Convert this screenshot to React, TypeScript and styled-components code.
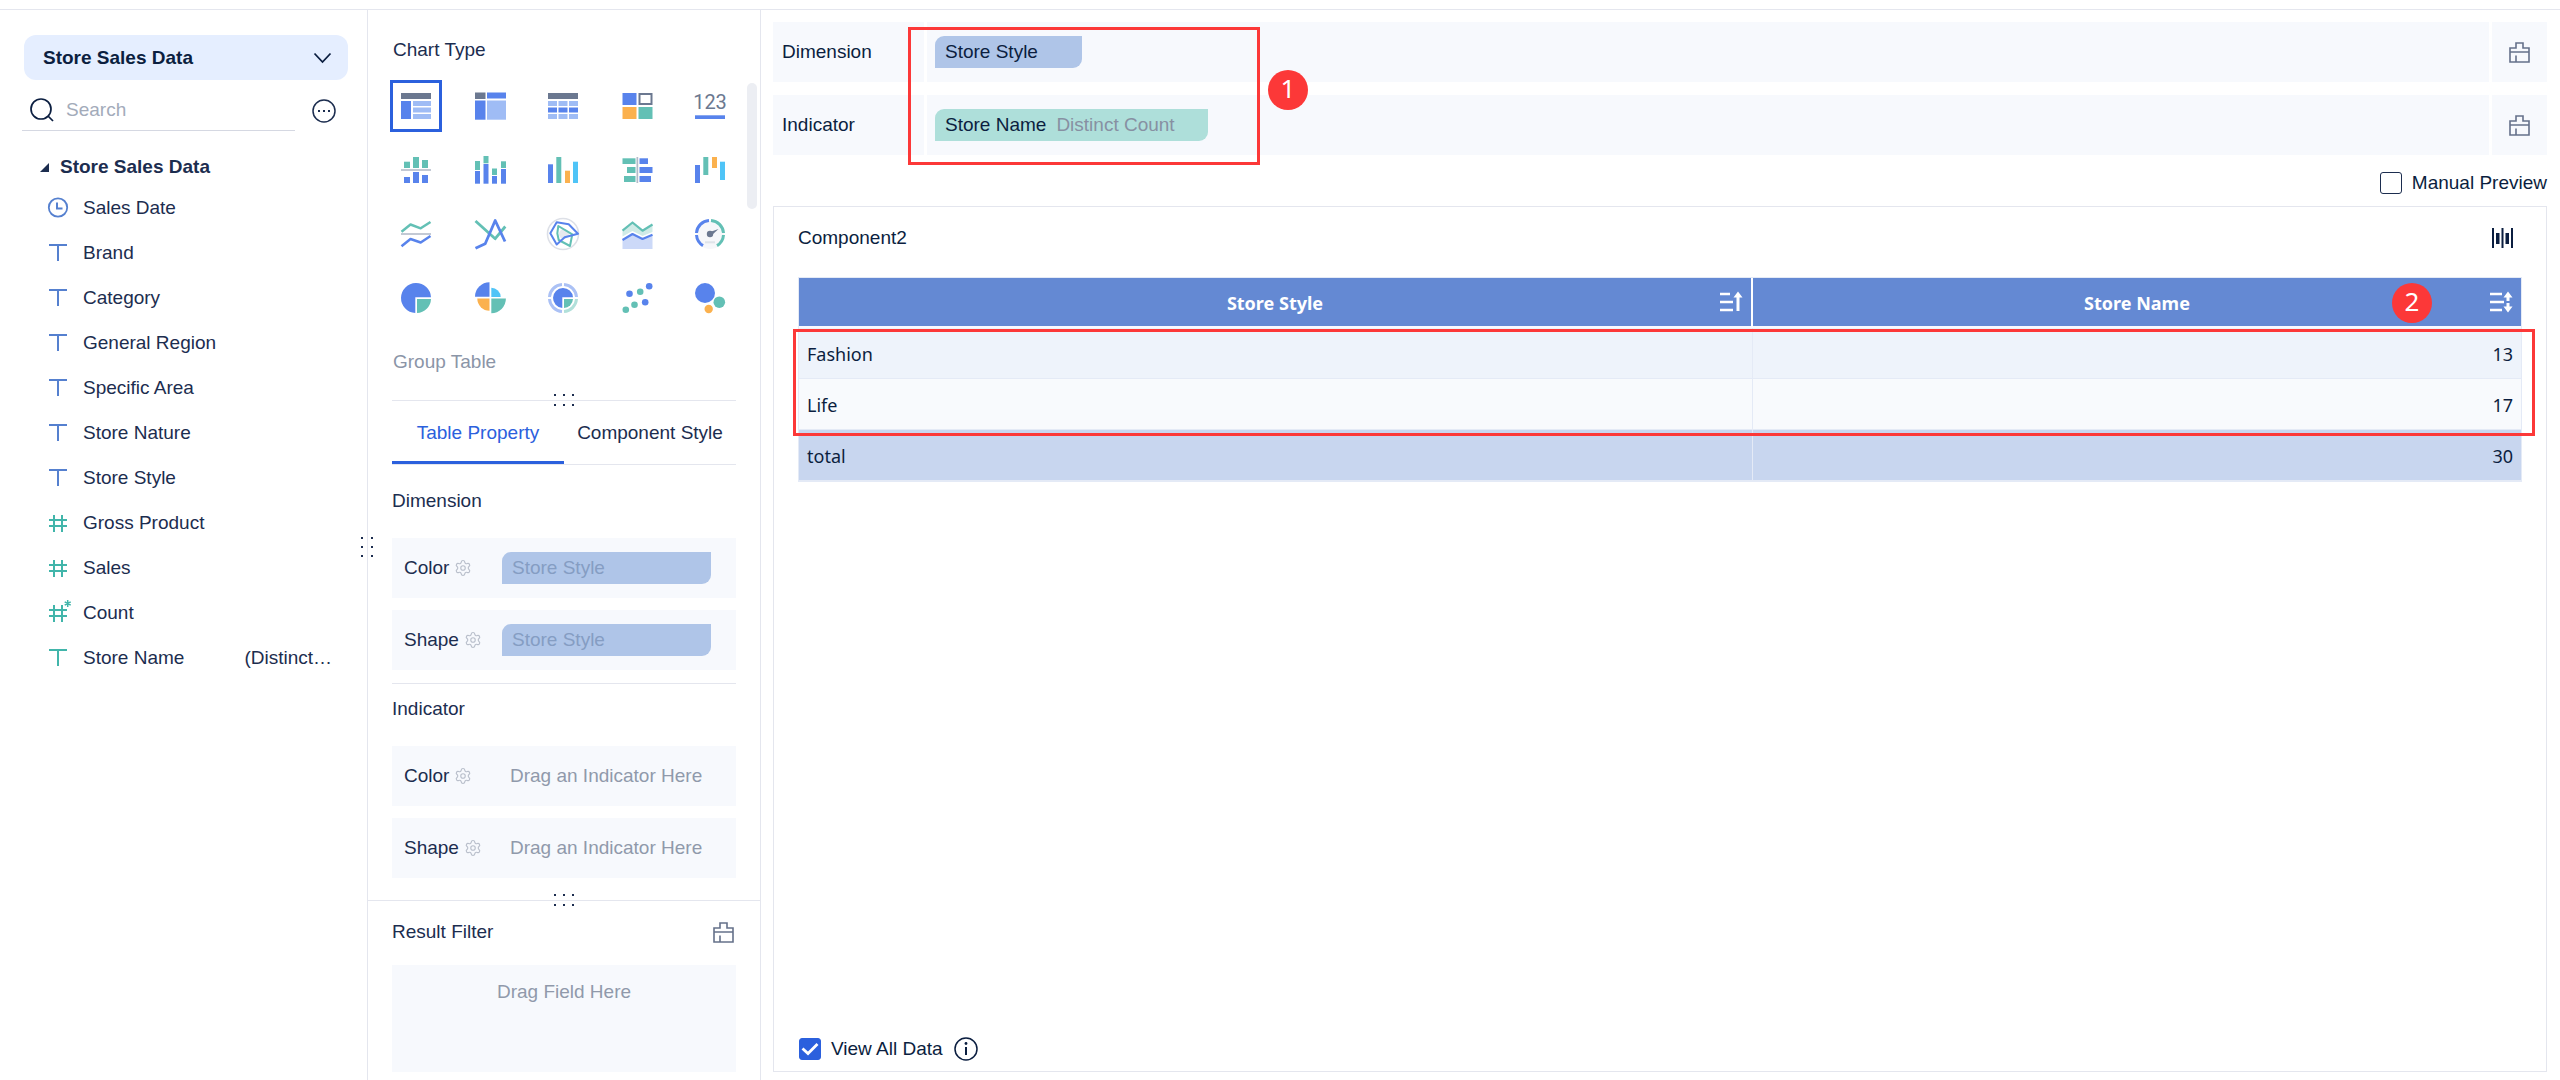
import React, { useState } from "react";
import styled, { createGlobalStyle, css } from "styled-components";
import { Settings } from "lucide-react";

const c = {
  ink: "#1c2d4f",
  inkDark: "#0b1e40",
  muted: "#9099ab",
  line: "#e4e6ee",
  panel: "#f7f9fd",
  primary: "#2b60dd",
  blue: "#5883ec",
  lightBlue: "#9fbcf5",
  teal: "#63c0b5",
  orange: "#fbb14e",
  cyan: "#4fc4f7",
  slate: "#6b7890",
  chipBlue: "#afc5e8",
  chipTeal: "#aedfda",
  mark: "#fc3838",
  head: "#6489d3",
};

const GlobalStyle = createGlobalStyle`
  *, *::before, *::after { box-sizing: border-box; }
  body {
    margin: 0;
    background: #fff;
    color: ${c.ink};
    font: 19px/24px "Liberation Sans", Arial, sans-serif;
  }
  button, input, select { font: inherit; color: inherit; }
  button { padding: 0; border: 0; background: none; cursor: pointer; }
  h2, h3, ul, p { margin: 0; padding: 0; font-size: inherit; font-weight: inherit; }
  ul { list-style: none; }
  svg { display: block; flex: none; }
`;

const Page = styled.div`
  min-height: 100vh;
  padding-top: 9px;
  display: flex;
`;

const Workspace = styled.div`
  flex: 1;
  min-width: 0;
  display: flex;
  border-top: 1px solid ${c.line};
`;

/* ---------- data sidebar ---------- */

const Sidebar = styled.aside`
  position: relative;
  flex: none;
  width: 368px;
  padding: 25px 19px 0 24px;
  border-right: 1px solid ${c.line};
`;

const DatasetPicker = styled.div`
  display: grid;
  align-items: center;
  height: 45px;
  border-radius: 12px;
  background: #e5eeff;

  > * { grid-area: 1 / 1; }
  > svg { justify-self: end; margin-right: 16px; pointer-events: none; }
`;

const DatasetSelect = styled.select`
  width: 100%;
  height: 100%;
  padding: 0 40px 0 19px;
  appearance: none;
  border: 0;
  background: none;
  color: ${c.inkDark};
  font-weight: bold;
`;

const SearchRow = styled.div`
  display: flex;
  align-items: center;
  gap: 17px;
  margin: 11px 0 0 -2px;
  padding-right: 12px;
`;

const SearchBox = styled.label`
  flex: none;
  display: flex;
  align-items: center;
  gap: 12px;
  width: 273px;
  height: 40px;
  padding: 0 0 1px 8px;
  border-bottom: 1px solid #d5d8e2;

  input {
    flex: 1;
    min-width: 0;
    padding: 0;
    border: 0;
    outline: 0;
    background: none;
  }
  input::placeholder { color: #a3abba; opacity: 1; }
`;

const TreeTitle = styled.h2`
  display: flex;
  align-items: center;
  gap: 11px;
  margin-top: 24px;
  padding-left: 16px;
  font-weight: bold;
`;

const FieldList = styled.ul`
  margin-top: 6px;
`;

const Field = styled.li`
  display: flex;
  align-items: center;
  justify-content: space-between;
  height: 45px;
  padding: 0 16px 0 24px;
  white-space: nowrap;
`;

const FieldName = styled.span`
  display: flex;
  align-items: center;
  gap: 11px;

  > svg { overflow: visible; }
`;

/* ---------- settings panel ---------- */

const SettingsPanel = styled.section`
  position: relative;
  flex: none;
  display: flex;
  flex-direction: column;
  width: 393px;
  border-right: 1px solid ${c.line};
`;

const Grip = styled.span<{ $vertical?: boolean }>`
  position: absolute;
  display: grid;
  grid-template-columns: repeat(${(p) => (p.$vertical ? 2 : 3)}, 2px);
  gap: ${(p) => (p.$vertical ? "7px 8px" : "8px 7px")};
  ${(p) =>
    p.$vertical
      ? css`
          right: -6px;
          top: 527px;
        `
      : css`
          left: 50%;
          top: -7px;
          margin-left: -10px;
        `}

  i {
    width: 2px;
    height: 2px;
    background: ${c.ink};
  }
`;

const ChartTypes = styled.div`
  position: relative;
  padding: 28px 24px 26px;
`;

const ChartTitle = styled.h2`
  padding-left: 1px;
`;

const ChartGrid = styled.div`
  display: grid;
  grid-template-columns: repeat(5, 52px);
  justify-content: space-between;
  row-gap: 12px;
  margin: 18px 0 26px -2px;
`;

const ChartButton = styled.button<{ $active?: boolean }>`
  display: grid;
  place-items: center;
  width: 52px;
  height: 52px;
  border: 3px solid ${(p) => (p.$active ? c.primary : "transparent")};

  svg { overflow: visible; }
`;

const ChartName = styled.p`
  padding-left: 1px;
  color: #8b95a7;
`;

const ScrollThumb = styled.span`
  position: absolute;
  top: 73px;
  right: 3px;
  width: 10px;
  height: 126px;
  border-radius: 5px;
  background: #eceef3;
`;

const Tabs = styled.div`
  position: relative;
  display: flex;
  height: 65px;
  margin: 0 24px;
  border-top: 1px solid ${c.line};
`;

const Tab = styled.button<{ $active?: boolean }>`
  flex: 1;
  border-bottom: 1px solid ${c.line};
  ${(p) =>
    p.$active &&
    css`
      color: ${c.primary};
      box-shadow: inset 0 -3px ${c.primary};
    `}
`;

const PropertyGroup = styled.div<{ $first?: boolean }>`
  margin: 0 24px;
  padding: ${(p) => (p.$first ? "24px 0 13px" : "13px 0 22px")};
  ${(p) => !p.$first && `border-top: 1px solid ${c.line};`}
`;

const PropertyRows = styled.div`
  display: grid;
  gap: 12px;
  margin-top: 25px;
`;

const PropertyRow = styled.div`
  display: grid;
  grid-template-columns: 98px 209px;
  align-items: center;
  height: 60px;
  padding-left: 12px;
  background: ${c.panel};
`;

const PropertyLabel = styled.span`
  display: flex;
  align-items: center;
  gap: 5px;

  button { color: #b9bfcb; }
`;

const Chip = styled.span<{ $tone?: "teal"; $muted?: boolean }>`
  display: inline-flex;
  align-items: center;
  gap: 10px;
  height: 32px;
  padding: 0 ${(p) => (p.$tone ? 33 : 44)}px 0 10px;
  border-radius: 9px 0 9px 0;
  background: ${(p) => (p.$tone ? c.chipTeal : c.chipBlue)};
  color: ${(p) => (p.$muted ? "#859dc3" : c.inkDark)};
  white-space: nowrap;

  small { font-size: inherit; color: #8790a2; }
`;

const Placeholder = styled.span`
  padding-left: 8px;
  color: ${c.muted};
  white-space: nowrap;
`;

const ResultFilter = styled.div`
  position: relative;
  flex: 1;
  display: flex;
  flex-direction: column;
  gap: 21px;
  padding: 19px 24px 8px;
  border-top: 1px solid ${c.line};
`;

const FilterHeader = styled.div`
  display: flex;
  align-items: center;
  justify-content: space-between;
  padding-right: 2px;
`;

const DropZone = styled.div`
  flex: 1;
  min-height: 107px;
  padding-top: 15px;
  background: ${c.panel};
  color: ${c.muted};
  text-align: center;
`;

/* ---------- preview ---------- */

const Main = styled.main`
  flex: 1;
  min-width: 0;
  display: flex;
  flex-direction: column;
  padding: 12px 13px 8px 12px;
  color: ${c.inkDark};
`;

const Shelves = styled.div`
  position: relative;
  display: grid;
  gap: 13px;
`;

const Shelf = styled.div`
  display: grid;
  grid-template-columns: 151px 1fr 55px;
  column-gap: 3px;
  height: 60px;

  > * {
    display: flex;
    align-items: center;
    background: ${c.panel};
  }
  > :nth-child(1) { padding-left: 9px; }
  > :nth-child(2) { padding-left: 8px; }
  > :nth-child(3) { justify-content: center; }
`;

const Highlight = styled.span<{ $area: "shelves" | "rows" }>`
  position: absolute;
  z-index: 1;
  border: 3px solid ${c.mark};
  pointer-events: none;
  ${(p) =>
    p.$area === "shelves"
      ? css`
          left: 135px;
          top: 5px;
          width: 352px;
          height: 138px;
        `
      : css`
          left: -6px;
          right: -14px;
          top: 51px;
          height: 107px;
        `}
`;

const Marker = styled.span<{ $area: "shelves" | "rows" }>`
  position: absolute;
  z-index: 1;
  width: 40px;
  height: 40px;
  border-radius: 50%;
  background: ${c.mark};
  color: #fff;
  font: 26px/36px "Noto Sans", "Open Sans", sans-serif;
  text-align: center;
  ${(p) =>
    p.$area === "shelves"
      ? css`
          left: 495px;
          top: 48px;
        `
      : css`
          right: 89px;
          top: 5px;
        `}
`;

const CheckLabel = styled.label`
  display: inline-flex;
  align-items: center;
  gap: 10px;
`;

const PreviewBar = styled.div`
  display: flex;
  justify-content: flex-end;
  margin: 16px 0 11px;
`;

const CheckCell = styled.span`
  display: grid;
  place-items: center;

  > * { grid-area: 1 / 1; }
  svg { visibility: hidden; pointer-events: none; }
  input:checked + svg { visibility: visible; }
`;

const CheckInput = styled.input`
  width: 22px;
  height: 22px;
  margin: 0;
  appearance: none;
  border: 1px solid ${c.ink};
  border-radius: 3px;
  background: #fff;

  &:checked {
    border-color: ${c.primary};
    background: ${c.primary};
  }
`;

const Card = styled.section`
  flex: 1;
  display: flex;
  flex-direction: column;
  padding: 19px 24px 10px;
  border: 1px solid ${c.line};
`;

const CardHeader = styled.div`
  display: flex;
  align-items: center;
  justify-content: space-between;
  padding-right: 9px;
`;

const TableWrap = styled.div`
  position: relative;
  margin-top: 27px;
  border: 1px solid #e4eaf6;
`;

const DataTable = styled.table`
  width: 100%;
  table-layout: fixed;
  border-collapse: separate;
  border-spacing: 0;
  font: 18px/24px "Noto Sans", "Open Sans", sans-serif;

  th {
    height: 50px;
    padding: 0 8px;
    background: ${c.head};
    border-bottom: 2px solid #f8faff;
    color: #fff;
    font-weight: bold;
  }
  th:first-child { border-right: 2px solid #fff; }
  td {
    height: 51px;
    padding: 2px 8px 0;
    border-bottom: 1px solid #e4eaf6;
  }
  td:first-child { border-right: 1px solid #e4eaf6; }
  td:last-child { text-align: right; }
  tbody tr:nth-child(odd) td { background: #eef3fb; }
  tbody tr:nth-child(even) td { background: #f8fafd; }
  tfoot td { background: #c8d6ef; }
`;

const WideCol = styled.col`
  width: 954px;
`;

const HeadCell = styled.div`
  display: grid;
  grid-template-columns: 1fr auto 1fr;
  align-items: center;

  > :first-child { grid-column: 2; padding-top: 2px; }
  > button { justify-self: end; }
`;

const CardFooter = styled.div`
  display: flex;
  align-items: center;
  gap: 11px;
  margin-top: auto;
  padding-left: 1px;
`;

/* ---------- icons ---------- */

const R = ({ b, f }: { b: [number, number, number, number]; f: string }) => (
  <rect x={b[0]} y={b[1]} width={b[2] - b[0]} height={b[3] - b[1]} fill={f} />
);

const Line = ({ d, s, w = 2.5 }: { d: string; s: string; w?: number }) => (
  <path d={d} fill="none" stroke={s} strokeWidth={w} strokeLinejoin="round" />
);

const { blue: B, lightBlue: L, teal: T, orange: O, cyan: C, slate: S } = c;

const charts: { name: string; art: React.ReactNode }[] = [
  {
    name: "Group Table",
    art: (
      <>
        <R b={[1, 3, 31, 9]} f={S} />
        <R b={[1, 11, 11, 29]} f={B} />
        <R b={[13, 11, 31, 16]} f={L} />
        <R b={[13, 17.5, 31, 22.5]} f={L} />
        <R b={[13, 24, 31, 29]} f={L} />
      </>
    ),
  },
  {
    name: "Cross Table",
    art: (
      <>
        <R b={[1, 2.5, 11.5, 9]} f={S} />
        <R b={[13, 2.5, 32, 8.5]} f={B} />
        <R b={[1, 10.5, 11.5, 29.7]} f={B} />
        <R b={[13, 10.5, 32, 29.7]} f={L} />
      </>
    ),
  },
  {
    name: "Detail Table",
    art: (
      <>
        <R b={[1, 3, 31, 9]} f={S} />
        {[1, 11.5, 22].map((x) => (
          <g key={x}>
            <R b={[x, 11, x + 9, 16]} f={L} />
            <R b={[x, 17.5, x + 9, 22.5]} f={B} />
            <R b={[x, 24, x + 9, 29]} f={L} />
          </g>
        ))}
      </>
    ),
  },
  {
    name: "Color Table",
    art: (
      <>
        <R b={[1.5, 3, 15.5, 15]} f={B} />
        <rect x="18.5" y="4" width="12" height="10" fill="#fff" stroke={S} strokeWidth="2" />
        <R b={[1.5, 17, 15.5, 29]} f={O} />
        <R b={[17.5, 17, 31.5, 29]} f={T} />
      </>
    ),
  },
  {
    name: "KPI Card",
    art: (
      <>
        <text x="16" y="19" textAnchor="middle" fontFamily="Roboto, sans-serif" fontSize="20" fill={S}>
          123
        </text>
        <R b={[1, 25.3, 31, 29]} f={B} />
      </>
    ),
  },
  {
    name: "Contrast Column Chart",
    art: (
      <>
        <R b={[1, 15, 31, 17]} f="#c3c9d4" />
        <R b={[4, 7.7, 10, 14]} f={T} />
        <R b={[13, 3, 19, 14]} f={T} />
        <R b={[22, 6, 28, 14]} f={T} />
        <R b={[4, 23, 10, 29]} f={B} />
        <R b={[13, 18, 19, 29]} f={B} />
        <R b={[22, 21, 28, 29]} f={B} />
      </>
    ),
  },
  {
    name: "Stacked Column Chart",
    art: (
      <>
        <R b={[1, 7, 6, 16]} f={T} />
        <R b={[1, 17, 6, 29.7]} f={B} />
        <R b={[9.5, 2, 14.5, 9.3]} f={T} />
        <R b={[9.5, 10, 14.5, 29.7]} f={B} />
        <R b={[18, 14.5, 23, 21]} f={T} />
        <R b={[18, 22, 23, 29.7]} f={B} />
        <R b={[27, 7.3, 32, 14]} f={T} />
        <R b={[27, 15, 32, 29.7]} f={B} />
      </>
    ),
  },
  {
    name: "Multi-series Column Chart",
    art: (
      <>
        <R b={[1, 10.3, 6, 29]} f={B} />
        <R b={[9.3, 3, 14.3, 29]} f={T} />
        <R b={[18, 16.7, 23, 29]} f={O} />
        <R b={[26, 7.7, 31, 29]} f={C} />
      </>
    ),
  },
  {
    name: "Contrast Bar Chart",
    art: (
      <>
        <R b={[15.5, 3, 17.2, 29]} f="#b3bac8" />
        <R b={[1.5, 4.3, 14.5, 10]} f={T} />
        <R b={[6, 13, 14.5, 19]} f={T} />
        <R b={[3, 22, 14.5, 28]} f={T} />
        <R b={[18.5, 4.3, 27, 10]} f={B} />
        <R b={[18.5, 13, 31.5, 19]} f={B} />
        <R b={[18.5, 22, 30, 28]} f={B} />
      </>
    ),
  },
  {
    name: "Range Column Chart",
    art: (
      <>
        <R b={[1, 11, 6, 29]} f={B} />
        <R b={[9.3, 3, 14.3, 21]} f={T} />
        <R b={[18, 3, 23, 14]} f={O} />
        <R b={[26, 7.7, 31, 26]} f={C} />
      </>
    ),
  },
  {
    name: "Line Chart",
    art: (
      <>
        <Line d="M1.5 13.7 10.5 6.5 20.7 10.3 30.5 4" s={T} />
        <R b={[1, 15, 31, 17]} f="#c3c9d4" />
        <Line d="M1.5 28.3 10.5 21 20.7 24.5 30.5 18" s={B} />
      </>
    ),
  },
  {
    name: "Range Line Chart",
    art: (
      <>
        <Line d="M1.5 3 21.2 20.7 31.3 8.5" s={T} w={2.8} />
        <Line d="M1.5 30.3 11.2 25.7 21.2 2.5 31 23.5" s={B} w={2.8} />
      </>
    ),
  },
  {
    name: "Radar Chart",
    art: (
      <>
        <circle cx="16" cy="16" r="15.5" fill="#fff" stroke="#dde0e7" strokeWidth="1.6" />
        <circle cx="17" cy="16" r="5" fill="#e6e9ee" />
        <Line d="M11.3 8 25.3 16.3 23 28 11.7 22 10.3 15.3Z" s={T} w={2} />
        <Line d="M9.7 4.3 21.7 6.3 31 15.7 17.7 19.3 9.7 26.5 3.3 15.3Z" s={B} w={2} />
      </>
    ),
  },
  {
    name: "Area Chart",
    art: (
      <>
        <path d="M1.5 12.7 11.5 4.3 21.5 12.7 31.5 6.5V14L21.5 18 11.5 13 1.5 18.5Z" fill="#d0ebe7" />
        <path d="M1.5 22.3 11.5 16 21.5 21 31.5 16.8V31H1.5Z" fill="#ccd9f8" />
        <Line d="M1.5 12.7 11.5 4.5 21.5 12.7 31.5 6.5" s={T} w={2.2} />
        <Line d="M1.5 22 11.5 16 21.5 21 31.5 16.8" s={B} w={2.2} />
      </>
    ),
  },
  {
    name: "Gauge",
    art: (
      <>
        <circle cx="16" cy="17" r="14" fill="#f6f7fa" />
        <Line d="M9 27.6A13.5 13.5 0 0 1 2.5 17" s={B} w={3} />
        <Line d="M2.5 15A13.5 13.5 0 0 1 15 2.5" s={B} w={3} />
        <Line d="M17 2.5A13.5 13.5 0 0 1 29.5 15" s={T} w={3} />
        <Line d="M29.5 17A13.5 13.5 0 0 1 23 27.6" s={T} w={3} />
        <circle cx="16" cy="16" r="3.2" fill={S} />
        <path d="M16 14 24.5 11 17.5 17.5Z" fill={S} />
        <R b={[11, 23.3, 21, 25.3]} f="#dfe3e9" />
      </>
    ),
  },
  {
    name: "Pie Chart",
    art: (
      <>
        <path d="M15.3 16V31A15 15 0 1 1 31 15.3H15.3Z" fill={B} />
        <path d="M17 17H31A14.5 14.5 0 0 1 17 31Z" fill={T} />
      </>
    ),
  },
  {
    name: "Rose Chart",
    art: (
      <>
        <path d="M15.5 14.8V.3A14.5 14.5 0 0 0 1 14.8Z" fill={B} />
        <path d="M17.3 15V5.7A9.4 9.4 0 0 1 26.7 15Z" fill={C} />
        <path d="M15.5 16.6V28.8A12.2 12.2 0 0 1 3.3 16.6Z" fill={O} />
        <path d="M17.3 16.6V31.2A14.6 14.6 0 0 0 31.9 16.6Z" fill={T} />
      </>
    ),
  },
  {
    name: "Multi-layer Pie Chart",
    art: (
      <>
        <Line d="M15 29.5A13.5 13.5 0 0 1 2.5 17" s="#abc1f5" w={3} />
        <Line d="M2.5 15A13.5 13.5 0 0 1 15 2.5" s="#abc1f5" w={3} />
        <Line d="M17 2.5A13.5 13.5 0 0 1 29.5 15" s="#abc1f5" w={3} />
        <Line d="M29.5 17A13.5 13.5 0 0 1 17 29.5" s="#b1e0da" w={3} />
        <path d="M15.3 16V26A10 10 0 1 1 26 15.3H15.3Z" fill={B} />
        <path d="M17 17H26A9.5 9.5 0 0 1 17 26Z" fill={T} />
      </>
    ),
  },
  {
    name: "Scatter Chart",
    art: (
      <>
        <circle cx="8.5" cy="11.7" r="3.3" fill={B} />
        <circle cx="19.2" cy="9.7" r="3.3" fill={T} />
        <circle cx="28.2" cy="4.3" r="3.3" fill={B} />
        <circle cx="4.8" cy="27.7" r="3.3" fill={T} />
        <circle cx="13.5" cy="22.7" r="3.3" fill={T} />
        <circle cx="24.2" cy="20.3" r="3.3" fill={B} />
      </>
    ),
  },
  {
    name: "Bubble Chart",
    art: (
      <>
        <circle cx="11" cy="11" r="10" fill={B} />
        <circle cx="25.3" cy="20.2" r="5.8" fill={T} />
        <circle cx="14.7" cy="27" r="4.2" fill={O} />
      </>
    ),
  },
];

type Kind = "date" | "text" | "number" | "count" | "measure";

const FieldIcon = ({ kind }: { kind: Kind }) => {
  const color = kind === "date" || kind === "text" ? "#5580cf" : "#41b5aa";
  return (
    <svg width="24" height="20" viewBox="0 0 24 20" fill="none" stroke={color} strokeWidth="1.7" aria-hidden="true">
      {kind === "date" && (
        <>
          <circle cx="10" cy="9.5" r="9.2" strokeWidth="1.8" />
          <path d="M9 4.5V10.5H14.5" strokeWidth="2" />
        </>
      )}
      {(kind === "text" || kind === "measure") && <path d="M1 2H19M10 2V18" strokeWidth="2" />}
      {(kind === "number" || kind === "count") && <path d="M1 7H19M1 13H19M6 2V19M14 2V19" strokeWidth="2" />}
      {kind === "count" && <path d="M19.7-3V4M16.7-1.2 22.7 2.2M22.7-1.2 16.7 2.2" strokeWidth="1.5" />}
    </svg>
  );
};

const ClearIcon = () => (
  <svg width="21" height="21" viewBox="0 0 21 21" fill="none" stroke="#65718a" strokeWidth="1.6" aria-hidden="true">
    <path d="M1 6H7V1H14V6H20V20H1ZM1 10H20M7 13.5V20" />
  </svg>
);

const SortIcon = ({ both }: { both?: boolean }) => (
  <svg width="24" height="22" viewBox="0 0 24 22" fill="none" stroke="#fff" strokeWidth="2.4" aria-hidden="true">
    <path d={both ? "M1 3H13M1 11H15M1 19H13" : "M1 3H11M1 11H14M1 19H14"} />
    {both ? (
      <>
        <path d="M19 5V10M19 12V17" strokeWidth="3" />
        <path d="M19 .5 23.5 6.5H14.5ZM19 21.5 23.5 15.5H14.5Z" fill="#fff" stroke="none" />
      </>
    ) : (
      <>
        <path d="M19 5V20" strokeWidth="3" />
        <path d="M19 .5 23.5 6.5H14.5Z" fill="#fff" stroke="none" />
      </>
    )}
  </svg>
);

const GripDots = ({ vertical }: { vertical?: boolean }) => (
  <Grip $vertical={vertical}>
    {[0, 1, 2, 3, 4, 5].map((n) => (
      <i key={n} />
    ))}
  </Grip>
);

const Check = ({ label, initial = false }: { label: string; initial?: boolean }) => {
  const [on, setOn] = useState(initial);
  return (
    <CheckLabel>
      <CheckCell>
        <CheckInput type="checkbox" checked={on} onChange={(e) => setOn(e.target.checked)} />
        <svg width="18" height="14" viewBox="0 0 18 14" fill="none" stroke="#fff" strokeWidth="2.8">
          <path d="M1.5 6.5 7 11.5 16.5 2" />
        </svg>
      </CheckCell>
      {label}
    </CheckLabel>
  );
};

/* ---------- page ---------- */

const fields: { name: string; kind: Kind; note?: string }[] = [
  { name: "Sales Date", kind: "date" },
  { name: "Brand", kind: "text" },
  { name: "Category", kind: "text" },
  { name: "General Region", kind: "text" },
  { name: "Specific Area", kind: "text" },
  { name: "Store Nature", kind: "text" },
  { name: "Store Style", kind: "text" },
  { name: "Gross Product", kind: "number" },
  { name: "Sales", kind: "number" },
  { name: "Count", kind: "count" },
  { name: "Store Name", kind: "measure", note: "(Distinct…" },
];

const rows = [
  ["Fashion", 13],
  ["Life", 17],
] as const;

const Property = ({ name, children }: { name: string; children: React.ReactNode }) => (
  <PropertyRow>
    <PropertyLabel>
      {name}
      <button type="button" aria-label={`${name} settings`}>
        <Settings size={18} strokeWidth={1.5} />
      </button>
    </PropertyLabel>
    {children}
  </PropertyRow>
);

export default function App() {
  const [chart, setChart] = useState(0);
  return (
    <Page>
      <GlobalStyle />
      <Workspace>
        <Sidebar>
          <DatasetPicker>
            <DatasetSelect aria-label="Dataset">
              <option>Store Sales Data</option>
            </DatasetSelect>
            <svg width="19" height="12" viewBox="0 0 19 12" fill="none" stroke={c.inkDark} strokeWidth="1.8">
              <path d="M1.5 1.5 9.5 10 17.5 1.5" />
            </svg>
          </DatasetPicker>
          <SearchRow>
            <SearchBox>
              <svg width="24" height="24" viewBox="0 0 24 24" fill="none" stroke={c.inkDark} strokeWidth="1.7">
                <circle cx="11" cy="11" r="10" />
                <path d="M18 18 23 23" />
              </svg>
              <input type="text" placeholder="Search" aria-label="Search" />
            </SearchBox>
            <button type="button" aria-label="More">
              <svg width="24" height="24" viewBox="0 0 24 24" fill="none" stroke={c.ink} strokeWidth="1.5">
                <circle cx="12" cy="12" r="11" />
                <path d="M6 12H8M11 12H13M16 12H18" strokeWidth="2" />
              </svg>
            </button>
          </SearchRow>
          <TreeTitle>
            <svg width="9" height="9" viewBox="0 0 9 9" fill={c.ink}>
              <path d="M9 0V9H0Z" />
            </svg>
            Store Sales Data
          </TreeTitle>
          <FieldList>
            {fields.map((f) => (
              <Field key={f.name}>
                <FieldName>
                  <FieldIcon kind={f.kind} />
                  {f.name}
                </FieldName>
                {f.note && <span>{f.note}</span>}
              </Field>
            ))}
          </FieldList>
          <GripDots vertical />
        </Sidebar>

        <SettingsPanel>
          <ChartTypes>
            <ChartTitle>Chart Type</ChartTitle>
            <ChartGrid>
              {charts.map((item, i) => (
                <ChartButton
                  key={item.name}
                  type="button"
                  aria-label={item.name}
                  $active={i === chart}
                  onClick={() => setChart(i)}
                >
                  <svg width="32" height="32" viewBox="0 0 32 32">
                    {item.art}
                  </svg>
                </ChartButton>
              ))}
            </ChartGrid>
            <ChartName>{charts[chart].name}</ChartName>
            <ScrollThumb />
          </ChartTypes>
          <Tabs role="tablist">
            <Tab type="button" role="tab" aria-selected="true" $active>
              Table Property
            </Tab>
            <Tab type="button" role="tab" aria-selected="false">
              Component Style
            </Tab>
            <GripDots />
          </Tabs>
          <PropertyGroup $first>
            <h3>Dimension</h3>
            <PropertyRows>
              {["Color", "Shape"].map((name) => (
                <Property key={name} name={name}>
                  <Chip $muted>Store Style</Chip>
                </Property>
              ))}
            </PropertyRows>
          </PropertyGroup>
          <PropertyGroup>
            <h3>Indicator</h3>
            <PropertyRows>
              {["Color", "Shape"].map((name) => (
                <Property key={name} name={name}>
                  <Placeholder>Drag an Indicator Here</Placeholder>
                </Property>
              ))}
            </PropertyRows>
          </PropertyGroup>
          <ResultFilter>
            <GripDots />
            <FilterHeader>
              <h3>Result Filter</h3>
              <button type="button" aria-label="Clear result filter">
                <ClearIcon />
              </button>
            </FilterHeader>
            <DropZone>Drag Field Here</DropZone>
          </ResultFilter>
        </SettingsPanel>

        <Main>
          <Shelves>
            <Shelf>
              <span>Dimension</span>
              <div>
                <Chip>Store Style</Chip>
              </div>
              <button type="button" aria-label="Clear dimensions">
                <ClearIcon />
              </button>
            </Shelf>
            <Shelf>
              <span>Indicator</span>
              <div>
                <Chip $tone="teal">
                  Store Name <small>Distinct Count</small>
                </Chip>
              </div>
              <button type="button" aria-label="Clear indicators">
                <ClearIcon />
              </button>
            </Shelf>
            <Highlight $area="shelves" />
            <Marker $area="shelves">1</Marker>
          </Shelves>
          <PreviewBar>
            <Check label="Manual Preview" />
          </PreviewBar>
          <Card>
            <CardHeader>
              <h2>Component2</h2>
              <button type="button" aria-label="Column width">
                <svg width="21" height="20" viewBox="0 0 21 20" fill={c.inkDark}>
                  <path d="M0 0H2V20H0ZM9.5 0H11.5V20H9.5ZM19 0H21V20H19ZM4 5H7.5V16H4ZM13.5 5H17V16H13.5Z" />
                </svg>
              </button>
            </CardHeader>
            <TableWrap>
              <DataTable>
                <colgroup>
                  <WideCol />
                  <col />
                </colgroup>
                <thead>
                  <tr>
                    <th scope="col">
                      <HeadCell>
                        <span>Store Style</span>
                        <button type="button" aria-label="Sort by Store Style">
                          <SortIcon />
                        </button>
                      </HeadCell>
                    </th>
                    <th scope="col">
                      <HeadCell>
                        <span>Store Name</span>
                        <button type="button" aria-label="Sort by Store Name">
                          <SortIcon both />
                        </button>
                      </HeadCell>
                    </th>
                  </tr>
                </thead>
                <tbody>
                  {rows.map(([style, count]) => (
                    <tr key={style}>
                      <td>{style}</td>
                      <td>{count}</td>
                    </tr>
                  ))}
                </tbody>
                <tfoot>
                  <tr>
                    <td>total</td>
                    <td>30</td>
                  </tr>
                </tfoot>
              </DataTable>
              <Highlight $area="rows" />
              <Marker $area="rows">2</Marker>
            </TableWrap>
            <CardFooter>
              <Check label="View All Data" initial />
              <button type="button" aria-label="About viewing all data">
                <svg width="24" height="24" viewBox="0 0 24 24" fill="none" stroke={c.inkDark} strokeWidth="1.5">
                  <circle cx="12" cy="12" r="11" />
                  <path d="M12 10V18" strokeWidth="2" />
                  <circle cx="12" cy="6.5" r="1.4" fill={c.inkDark} stroke="none" />
                </svg>
              </button>
            </CardFooter>
          </Card>
        </Main>
      </Workspace>
    </Page>
  );
}
